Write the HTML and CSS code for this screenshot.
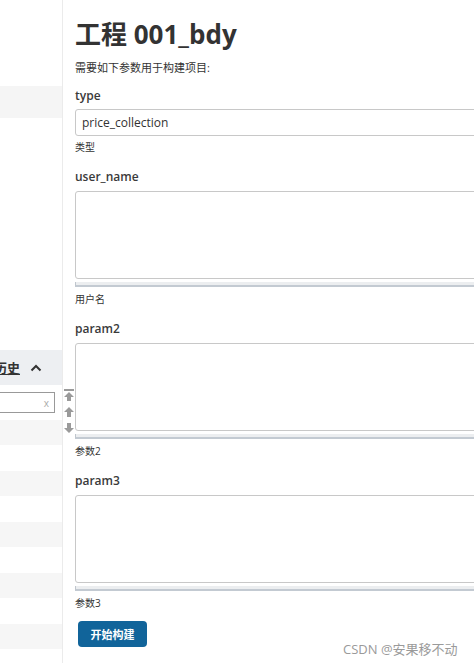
FILE: index.html
```html
<!DOCTYPE html>
<html lang="zh">
<head>
<meta charset="utf-8">
<title>工程 001_bdy</title>
<link rel="stylesheet" href="styles.css">
</head>
<body>
<div class="page">
  <aside class="side">
    <div class="side-block"></div>
    <div class="side-head">
      <span class="side-title">构建历史</span>
      <svg class="chev" width="12" height="8" viewBox="0 0 12 8"><path d="M1.5 6.5 L6 2 L10.5 6.5" fill="none" stroke="#333" stroke-width="2"/></svg>
    </div>
    <div class="side-filter"><span class="filter-x">x</span></div>
    <ul class="side-rows">
      <li class="row gray"></li><li class="row"></li>
      <li class="row gray"></li><li class="row"></li>
      <li class="row gray"></li><li class="row"></li>
      <li class="row gray"></li><li class="row"></li>
      <li class="row gray"></li><li class="row"></li>
    </ul>
  </aside>
  <div class="scroll-tools">
    <svg width="10" height="12" viewBox="0 0 10 12"><rect x="0" y="0" width="10" height="2" fill="#9a9a9a"/><path d="M5 3 L10 8 H7 V12 H3 V8 H0 Z" fill="#9a9a9a"/></svg>
    <svg width="10" height="10" viewBox="0 0 10 10"><path d="M5 0 L10 5 H7 V10 H3 V5 H0 Z" fill="#9a9a9a"/></svg>
    <svg width="10" height="10" viewBox="0 0 10 10"><path d="M5 10 L10 5 H7 V0 H3 V5 H0 Z" fill="#9a9a9a"/></svg>
  </div>
  <main class="main">
    <h1 class="title">工程 001_bdy</h1>
    <p class="intro">需要如下参数用于构建项目:</p>
    <form class="params">
      <div class="param">
        <div class="label">type</div>
        <div class="field"><span class="input">price_collection</span></div>
        <div class="desc">类型</div>
      </div>
      <div class="param">
        <div class="label">user_name</div>
        <div class="area"></div>
        <div class="handle"></div>
        <div class="desc">用户名</div>
      </div>
      <div class="param">
        <div class="label">param2</div>
        <div class="area"></div>
        <div class="handle"></div>
        <div class="desc">参数2</div>
      </div>
      <div class="param">
        <div class="label">param3</div>
        <div class="area"></div>
        <div class="handle"></div>
        <div class="desc">参数3</div>
      </div>
      <div class="actions"><span class="btn">开始构建</span></div>
    </form>
  </main>
  <div class="watermark">CSDN @安果移不动</div>
</div>
</body>
</html>
```

FILE: styles.css
```css
html, body {
  margin: 0;
  padding: 0;
  background: #fff;
}
body {
  font-family: "Open Sans", "Noto Sans CJK SC", sans-serif;
  color: #333;
}
.page {
  position: relative;
  display: flex;
  width: 474px;
  height: 663px;
  overflow: hidden;
}
.side {
  flex: 0 0 62px;
  width: 62px;
  border-right: 1px solid #ebebeb;
  overflow: hidden;
}
.side-block {
  margin-top: 86px;
  height: 32px;
  background: #f5f5f5;
}
.side-head {
  margin-top: 232px;
  height: 35px;
  background: #edeff2;
  display: flex;
  align-items: center;
  justify-content: flex-end;
  gap: 10px;
  padding-right: 20px;
  white-space: nowrap;
}
.side-title {
  font-size: 13px;
  font-weight: 700;
  text-decoration: underline;
  flex: none;
}
.chev { flex: none; }
.side-filter {
  margin-top: 7px;
  width: 52px;
  height: 19px;
  border: 1px solid #999;
  border-left: none;
  display: flex;
  align-items: center;
  justify-content: flex-end;
  padding-right: 2px;
  box-sizing: content-box;
}
.filter-x {
  font-size: 10px;
  color: #aaa;
  margin-right: 3px;
}
.side-rows {
  list-style: none;
  margin: 7px 0 0;
  padding: 0;
}
.row { height: 26px; }
.row.gray { height: 25px; background: #f6f6f6; }

.scroll-tools {
  position: absolute;
  left: 64px;
  top: 389px;
  display: flex;
  flex-direction: column;
  gap: 6px;
}

.main {
  flex: 1;
  padding-left: 12px;
  overflow: hidden;
}
.title {
  margin: 17px 0 0;
  font-size: 26px;
  line-height: 34px;
  font-weight: 700;
  color: #333;
  white-space: nowrap;
}
.intro {
  margin: 9px 0 0;
  font-size: 11px;
  line-height: 16px;
}
.params { margin: 0; }
.param { width: 430px; }
.label {
  margin-top: 11px;
  font-size: 12px;
  font-weight: 600;
  line-height: 17px;
  color: #3a3a3a;
}
.param + .param .label { margin-top: 14px; }
.field { margin-top: 5px; }
.input {
  display: block;
  height: 25px;
  border: 1px solid #c8c8c8;
  border-radius: 3px;
  padding: 0 6px;
  font-size: 12px;
  line-height: 25px;
  color: #333;
}
.area {
  margin-top: 6px;
  height: 86px;
  border: 1px solid #c8c8c8;
  border-radius: 3px;
}
.handle {
  margin-top: 3px;
  height: 3px;
  background: #eceef0;
  border-left: 1px solid #c0c6cd;
  border-bottom: 2px solid #c3cad2;
}
.desc {
  margin-top: 5px;
  font-size: 10px;
  line-height: 14px;
}
.field + .desc { margin-top: 4px; }
.actions { margin-top: 11px; padding-left: 3px; }
.btn {
  display: inline-flex;
  align-items: center;
  justify-content: center;
  width: 69px;
  height: 26px;
  border-radius: 4px;
  background: #11649a;
  color: #fff;
  font-size: 11px;
  font-weight: 700;
}
.watermark {
  position: absolute;
  left: 343px;
  top: 639px;
  font-size: 13px;
  color: #9a9a9a;
  white-space: nowrap;
}
```
